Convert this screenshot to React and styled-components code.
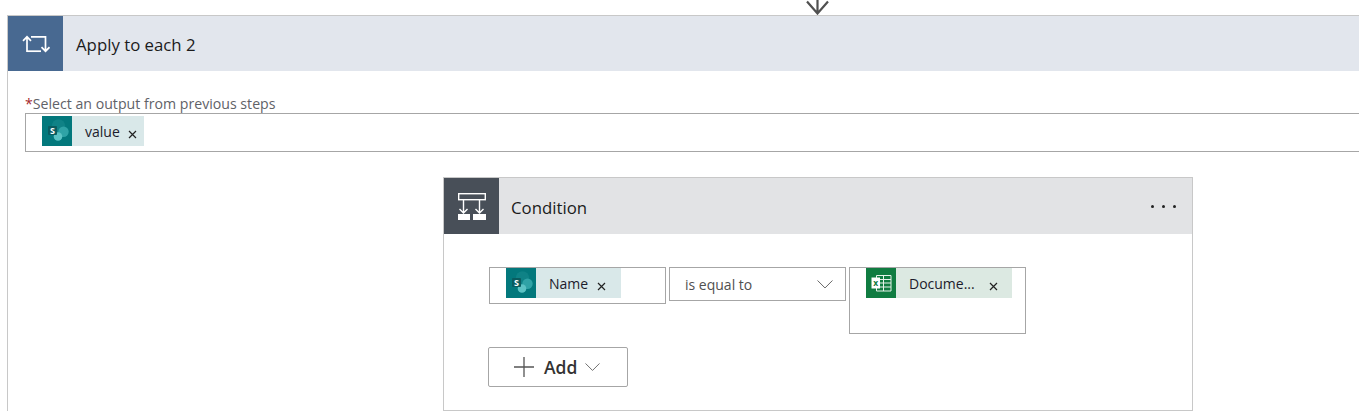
import React from "react";
import styled, { createGlobalStyle } from "styled-components";

const GlobalStyle = createGlobalStyle`
  html, body {
    margin: 0;
    padding: 0;
    background: #fff;
    overflow: hidden;
  }
  * {
    box-sizing: border-box;
  }
  body {
    font-family: "Open Sans", "Noto Sans", "Liberation Sans", sans-serif;
    color: #1d1d1d;
  }
`;

function LoopIcon() {
  return (
    <svg width="28" height="18" viewBox="0 0 28 18" fill="none" stroke="#fff" strokeWidth="1.7">
      <path d="M5 17V2M1 5.8l4-4 4 4" />
      <path d="M5 16.2h14" />
      <path d="M9 1.8h14.5V16M19.5 12.2l4 4 4-4" />
    </svg>
  );
}

function ConditionIcon() {
  return (
    <svg width="28" height="29" viewBox="0 0 28 29" fill="none" stroke="#fff" strokeWidth="1.4">
      <rect x="0.7" y="1.7" width="26.6" height="6" />
      <path d="M5.5 7.5V21M1.5 17l4 4 4-4M21.5 7.5V21M17.5 17l4 4 4-4" />
      <rect x="0" y="22" width="12" height="6" fill="#fff" stroke="none" />
      <rect x="15" y="22" width="13" height="6" fill="#fff" stroke="none" />
    </svg>
  );
}

function SharePointIcon() {
  return (
    <svg width="30" height="30" viewBox="0 0 30 30">
      <circle cx="16.5" cy="10" r="6.8" fill="#0f8286" />
      <circle cx="21.5" cy="15.8" r="5.2" fill="#2fa3a6" />
      <circle cx="16" cy="20.5" r="4.3" fill="#5cc3c4" />
      <rect x="6" y="10" width="9" height="9" rx="1" fill="#0a5c5f" />
      <text x="10.5" y="17.5" fontSize="9" fontWeight="700" fill="#fff" textAnchor="middle" fontFamily="Open Sans, sans-serif">S</text>
    </svg>
  );
}

function ExcelIcon() {
  return (
    <svg width="30" height="30" viewBox="0 0 30 30" fill="none">
      <path d="M10.5 7.5h14.5v15.5H10.5z" stroke="#e6f2ea" strokeWidth="1" />
      <path d="M17.5 7.5v15.5M13 11.5h12M13 15h12M13 19h12" stroke="#e6f2ea" strokeWidth="1" />
      <rect x="5.5" y="9.5" width="8.5" height="11" fill="#fff" />
      <text x="9.8" y="18" fontSize="8.5" fontWeight="700" fill="#107c41" textAnchor="middle" fontFamily="Open Sans, sans-serif">x</text>
    </svg>
  );
}

function CloseIcon() {
  return (
    <svg width="9" height="9" viewBox="0 0 9 9" stroke="#222" strokeWidth="1.2" fill="none">
      <path d="M1 1l7 7M8 1L1 8" />
    </svg>
  );
}

function Chevron({ size = 16 }) {
  return (
    <svg width={size} height={size * 0.56} viewBox="0 0 16 9" fill="none" stroke="#666" strokeWidth="1">
      <path d="M.5.5 8 8l7.5-7.5" />
    </svg>
  );
}

function Token({ kind, children, width, gap }) {
  return (
    <TokenWrap $kind={kind} $width={width}>
      <TokenIcon $kind={kind}>{kind === "excel" ? <ExcelIcon /> : <SharePointIcon />}</TokenIcon>
      <TokenText>{children}</TokenText>
      <TokenClose $gap={gap}>
        <CloseIcon />
      </TokenClose>
    </TokenWrap>
  );
}

export default function App() {
  return (
    <>
      <GlobalStyle />
      <Page>
        <Flow>
          <ArrowDown>
            <svg width="26" height="15" viewBox="0 0 26 15" fill="none" stroke="#505050" strokeWidth="2.2">
              <path d="M12.5 0v14M2 1.5l10.5 12 10.5-12" />
            </svg>
          </ArrowDown>
          <Scope>
            <ScopeHeader>
              <ScopeIcon>
                <LoopIcon />
              </ScopeIcon>
              <ScopeTitle>Apply to each 2</ScopeTitle>
            </ScopeHeader>
            <ScopeBody>
              <Label>
                <Required>*</Required>Select an output from previous steps
              </Label>
              <OutputBox>
                <Token kind="sharepoint" width={102} gap={8}>value</Token>
              </OutputBox>
              <ConditionCard>
                <ConditionHeader>
                  <ConditionIconBox>
                    <ConditionIcon />
                  </ConditionIconBox>
                  <ConditionTitle>Condition</ConditionTitle>
                  <Dots>
                    <i />
                    <i />
                    <i />
                  </Dots>
                </ConditionHeader>
                <ConditionBody>
                  <ConditionRow>
                    <ValueBox $height={37} $margin={1}>
                      <Token kind="sharepoint" width={115} gap={9}>Name</Token>
                    </ValueBox>
                    <Select>
                      <span>is equal to</span>
                      <Chevron />
                    </Select>
                    <ValueBox $height={67} $margin={3}>
                      <Token kind="excel" width={146} gap={14}>Docume...</Token>
                    </ValueBox>
                  </ConditionRow>
                  <AddButton>
                    <svg width="20" height="20" viewBox="0 0 20 20" stroke="#555" strokeWidth="1.3">
                      <path d="M10 0v20M0 10h20" />
                    </svg>
                    <span>Add</span>
                    <Chevron size={15} />
                  </AddButton>
                </ConditionBody>
              </ConditionCard>
            </ScopeBody>
          </Scope>
        </Flow>
      </Page>
    </>
  );
}

const Page = styled.div`
  width: 1359px;
  height: 418px;
  overflow: hidden;
  padding-left: 7px;
`;

const Flow = styled.div`
  width: 1622px;
  display: flex;
  flex-direction: column;
`;

const ArrowDown = styled.div`
  height: 15px;
  display: flex;
  justify-content: center;
  align-items: flex-end;
`;

const Scope = styled.section`
  border: 1px solid #c8c8c8;
  border-bottom: none;
`;

const ScopeHeader = styled.div`
  display: flex;
  align-items: center;
  height: 55px;
  background: #e2e6ed;
`;

const ScopeIcon = styled.div`
  width: 55px;
  height: 55px;
  background: #486991;
  display: flex;
  align-items: center;
  justify-content: center;
`;

const ScopeTitle = styled.div`
  margin: 1px 0 0 13px;
  font-size: 16.8px;
  color: #1b1b1b;
`;

const ScopeBody = styled.div`
  padding: 24px 17px 0;
`;

const Label = styled.div`
  font-size: 14.15px;
  line-height: 18px;
  height: 18px;
  color: #5f6268;
`;

const Required = styled.span`
  color: #a4262c;
  margin-right: 0;
`;

const OutputBox = styled.div`
  height: 39px;
  border: 1px solid #a6a6a6;
  padding: 2px 0 0 16px;
  display: flex;
  align-items: flex-start;
`;

const TokenWrap = styled.div`
  width: ${(p) => p.$width}px;
  height: 30px;
  display: flex;
  align-items: center;
  background: ${(p) => (p.$kind === "excel" ? "#dce9e2" : "#d9e8e9")};
`;

const TokenIcon = styled.div`
  width: 30px;
  height: 30px;
  flex: none;
  display: flex;
  align-items: center;
  justify-content: center;
  background: ${(p) => (p.$kind === "excel" ? "#107c41" : "#03787c")};
`;

const TokenText = styled.span`
  margin-left: 13px;
  font-size: 14px;
  color: #1c1c2c;
  line-height: 30px;
  margin-top: 2px;
`;

const TokenClose = styled.span`
  margin-left: ${(p) => p.$gap}px;
  display: flex;
  margin-top: 7px;
`;

const ConditionCard = styled.div`
  width: 750px;
  height: 234px;
  margin: 25px auto 0;
  border: 1px solid #c8c8c8;
`;

const ConditionHeader = styled.div`
  display: flex;
  align-items: center;
  height: 56px;
  background: #e2e3e5;
`;

const ConditionIconBox = styled.div`
  width: 55px;
  height: 56px;
  background: #484f58;
  display: flex;
  align-items: center;
  justify-content: center;
`;

const ConditionTitle = styled.div`
  margin: 3px 0 0 12px;
  font-size: 16.8px;
  color: #1b1b1b;
  flex: 1;
`;

const Dots = styled.div`
  display: flex;
  gap: 8px;
  margin-right: 16px;

  i {
    width: 3px;
    height: 3px;
    border-radius: 50%;
    background: #222;
  }
`;

const ConditionBody = styled.div`
  padding: 33px 0 0 44px;
`;

const ConditionRow = styled.div`
  display: flex;
  align-items: flex-start;
`;

const ValueBox = styled.div`
  width: 177px;
  height: ${(p) => p.$height}px;
  margin-left: ${(p) => p.$margin}px;
  border: 1px solid #a6a6a6;
  padding-left: 16px;
`;

const Select = styled.div`
  width: 177px;
  height: 34px;
  margin-left: 3px;
  border: 1px solid #a6a6a6;
  padding: 0 12px 0 15px;
  display: flex;
  align-items: center;
  justify-content: space-between;
  font-size: 14px;
  color: #505050;
`;

const AddButton = styled.button`
  width: 140px;
  height: 40px;
  margin-top: 13px;
  border: 1px solid #a6a6a6;
  border-radius: 2px;
  background: #fff;
  display: flex;
  align-items: center;
  padding: 0 0 0 25px;
  font-family: inherit;
  font-size: 17.5px;
  font-weight: 600;
  color: #333;

  span {
    margin: 0 8px 0 10px;
  }
`;
